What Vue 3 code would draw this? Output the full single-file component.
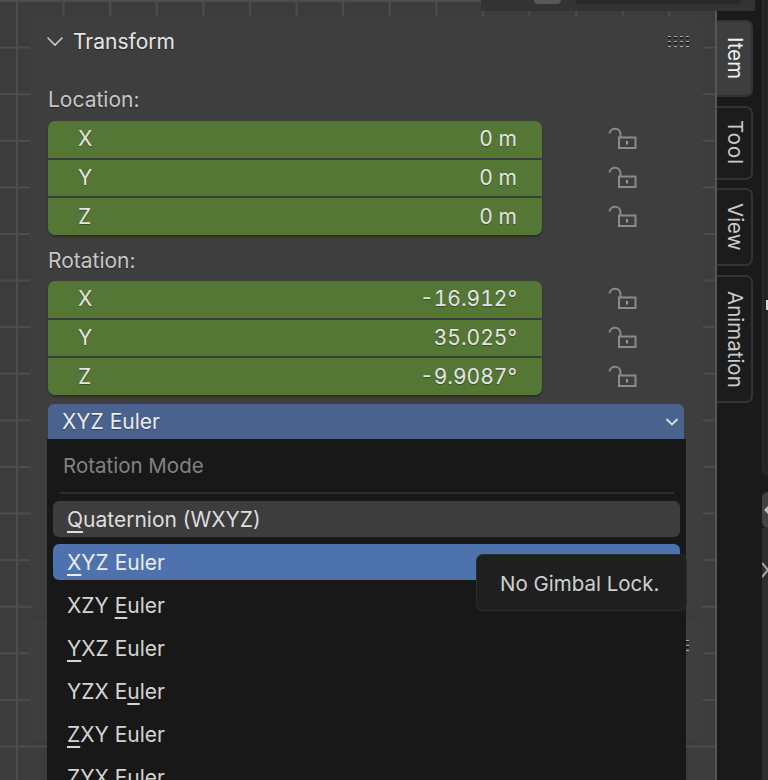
<script setup>
const locRows = [
  { axis: "X", value: "0 m" },
  { axis: "Y", value: "0 m" },
  { axis: "Z", value: "0 m" },
]
const rotRows = [
  { axis: "X", value: "-16.912°" },
  { axis: "Y", value: "35.025°" },
  { axis: "Z", value: "-9.9087°" },
]
const tabs = ["Item", "Tool", "View", "Animation"]
// each item is split around its underlined shortcut letter
const modes = [
  { pre: "", key: "X", post: "YZ Euler", active: true },
  { pre: "XZY ", key: "E", post: "uler" },
  { pre: "", key: "Y", post: "XZ Euler" },
  { pre: "YZX E", key: "u", post: "ler" },
  { pre: "", key: "Z", post: "XY Euler" },
  { pre: "ZYX Euler", key: "", post: "" },
]
</script>

<template>
  <div class="editor">
    <div class="viewport">
      <div class="topbar">
        <span class="top-pill"></span>
        <span class="top-field"></span>
      </div>
      <section class="panel">
        <header class="panel-head">
          <svg class="chevron" width="18" height="12" viewBox="0 0 18 12">
            <path d="M1.5 2.5 9 10l7.5-7.5" fill="none" stroke="#c8c8c8" stroke-width="1.6" />
          </svg>
          <span class="panel-title">Transform</span>
          <span class="grip"></span>
        </header>

        <div class="label">Location:</div>
        <div class="field-group">
          <div class="column">
            <div v-for="row in locRows" :key="row.axis" class="field">
              <span class="axis">{{ row.axis }}</span>
              <span class="value">{{ row.value }}</span>
            </div>
          </div>
          <div class="locks">
            <svg v-for="row in locRows" :key="row.axis" class="lock" width="30" height="24" viewBox="0 0 30 24">
              <path d="M2.5 7.5C3 1.5 13.5 0.5 13.5 8.5V11" fill="none" stroke="#8a8a8a" stroke-width="2" />
              <rect x="12" y="11.5" width="16.5" height="10.5" fill="none" stroke="#8a8a8a" stroke-width="2" />
              <rect x="19" y="15" width="2" height="3.5" fill="#9a9a9a" />
            </svg>
          </div>
        </div>

        <div class="label label-rot">Rotation:</div>
        <div class="field-group">
          <div class="column">
            <div v-for="row in rotRows" :key="row.axis" class="field">
              <span class="axis">{{ row.axis }}</span>
              <span class="value">{{ row.value }}</span>
            </div>
          </div>
          <div class="locks">
            <svg v-for="row in rotRows" :key="row.axis" class="lock" width="30" height="24" viewBox="0 0 30 24">
              <path d="M2.5 7.5C3 1.5 13.5 0.5 13.5 8.5V11" fill="none" stroke="#8a8a8a" stroke-width="2" />
              <rect x="12" y="11.5" width="16.5" height="10.5" fill="none" stroke="#8a8a8a" stroke-width="2" />
              <rect x="19" y="15" width="2" height="3.5" fill="#9a9a9a" />
            </svg>
          </div>
        </div>

        <div class="select">
          <span>XYZ Euler</span>
          <svg width="14" height="10" viewBox="0 0 14 10">
            <path d="M1.5 2 7 7.5 12.5 2" fill="none" stroke="#e0e0e0" stroke-width="1.8" />
          </svg>
        </div>
      </section>

      <section class="panel panel-second">
        <header class="panel-head">
          <span class="grip"></span>
        </header>
      </section>

      <div class="menu">
        <div class="menu-title">Rotation Mode</div>
        <div class="menu-sep"></div>
        <div class="menu-item current"><u>Q</u>uaternion (WXYZ)</div>
        <div v-for="m in modes" :key="m.pre + m.key + m.post" class="menu-item" :class="{ active: m.active }">{{ m.pre }}<u>{{ m.key }}</u>{{ m.post }}</div>
      </div>
      <div class="tooltip">No Gimbal Lock.</div>
    </div>

    <nav class="tabs">
      <div v-for="(t, i) in tabs" :key="t" class="tab" :class="{ on: i === 0 }">
        <span>{{ t }}</span>
      </div>
    </nav>

    <aside class="edge">
      <div class="edge-block">
        <span class="edge-tick"></span>
      </div>
      <div class="edge-pill">
        <svg width="6" height="14" viewBox="0 0 6 14"><path d="M6 3 2 7l4 4z" fill="#bdbdbd" /></svg>
      </div>
      <div class="edge-chevron">
        <svg width="6" height="18" viewBox="0 0 6 18"><path d="M0 2 6 9l-6 7" fill="none" stroke="#a8a8a8" stroke-width="2" /></svg>
      </div>
    </aside>
  </div>
</template>

<style>
html, body {
  margin: 0;
  background: #1a1a1a;
}
</style>

<style scoped>
.editor {
  display: flex;
  width: 768px;
  height: 780px;
  overflow: hidden;
  font-family: Inter, "Liberation Sans", sans-serif;
  color: #dedede;
  position: relative;
}

.viewport {
  position: relative;
  width: 717px;
  height: 780px;
  flex: none;
  box-sizing: border-box;
  padding: 16px 12px 0 30px;
  background-color: #3c3c3c;
  background-image:
    linear-gradient(#4d4d4d 2px, transparent 2px),
    linear-gradient(90deg, #4d4d4d 2px, transparent 2px);
  background-size: 46.6px 46.6px;
  background-position: 16px 0;
  border-right: 2px solid #555;
}

/* strip of the header that pokes in above the panel */
.topbar {
  position: absolute;
  left: 481px;
  top: 0;
  width: 274px;
  height: 11px;
  background: #333;
  z-index: 1;
}

.top-pill {
  position: absolute;
  left: 53px;
  top: 0;
  width: 27px;
  height: 4px;
  background: #585858;
  border-radius: 0 0 6px 6px;
}

.top-field {
  position: absolute;
  left: 95px;
  top: 0;
  width: 165px;
  height: 4px;
  background: #292929;
  border-radius: 0 0 5px 5px;
}

.panel {
  background: #3e3e3e;
  border-radius: 8px;
  height: 594px;
  box-sizing: border-box;
  padding: 0 18px;
}

.panel-second {
  height: 120px;
  margin-top: 10px;
}

.panel-head {
  display: flex;
  align-items: center;
  height: 50px;
  margin-bottom: 19px;
  margin-left: -2px;
}

.chevron {
  margin-right: 9px;
}

.panel-title {
  font-size: 21px;
  color: #e6e6e6;
  text-shadow: 0 1px 1px rgba(0, 0, 0, 0.4);
}

.grip {
  margin-left: auto;
  margin-right: -6px;
  width: 23px;
  height: 11px;
  background-image:
    linear-gradient(#1e1e1e 2px, transparent 2px),
    linear-gradient(#a8a8a8 2px, transparent 2px);
  background-size: 6px 5px;
  background-position: 0 1px, 0 0;
  -webkit-mask-image: linear-gradient(90deg, #000 3px, transparent 3px);
  -webkit-mask-size: 6px 100%;
  mask-image: linear-gradient(90deg, #000 3px, transparent 3px);
  mask-size: 6px 100%;
}

.label {
  font-size: 21px;
  line-height: 30px;
  height: 36px;
  color: #c6c6c6;
  text-shadow: 0 1px 1px rgba(0, 0, 0, 0.4);
}

.label-rot {
  margin-top: 10px;
  line-height: 31px;
}

.field-group {
  display: flex;
}

.column {
  width: 494px;
  display: flex;
  flex-direction: column;
  gap: 2px;
  border-radius: 7px;
  overflow: hidden;
  box-shadow: 0 2px 2px #2e2e2e;
}

.field {
  height: 36.7px;
  flex: none;
  box-sizing: border-box;
  display: flex;
  justify-content: space-between;
  align-items: center;
  padding: 0 25px 1px 30px;
  background: #547735;
  font-size: 21px;
  color: #e4e4e4;
  text-shadow: 0 1px 1px rgba(0, 0, 0, 0.35);
}

.value {
  font-variant-numeric: tabular-nums;
}

.locks {
  margin-left: 65px;
  display: flex;
  flex-direction: column;
  gap: 15px;
  padding-top: 5px;
}

.lock {
  display: block;
}

.select {
  margin-top: 9px;
  width: 636px;
  height: 35px;
  box-sizing: border-box;
  padding: 0 5px 0 14px;
  display: flex;
  align-items: center;
  justify-content: space-between;
  background: #4a628e;
  border-radius: 6px 6px 0 0;
  font-size: 21px;
  color: #ececec;
  text-shadow: 0 1px 1px rgba(0, 0, 0, 0.35);
}

.menu {
  position: absolute;
  left: 47px;
  top: 439px;
  width: 639px;
  height: 341px;
  box-sizing: border-box;
  padding: 0 6px;
  background: #181818;
  font-size: 21px;
  color: #d4d4d4;
}

.menu-title {
  height: 53px;
  line-height: 54px;
  padding-left: 10px;
  font-size: 20.5px;
  color: #828282;
}

.menu-sep {
  height: 2px;
  margin: 0 6px 7px 7px;
  background: #2e2e2e;
}

.menu-item {
  height: 36px;
  line-height: 38px;
  margin-bottom: 7px;
  padding-left: 14px;
  border-radius: 6px;
  white-space: pre;
}

.menu-item u {
  text-underline-offset: 4px;
  text-decoration-thickness: 2px;
}

.menu-item.current {
  background: #3d3d3d;
  color: #dedede;
}

.menu-item.active {
  background: #4d72ae;
  color: #ececec;
}

.tooltip {
  position: absolute;
  left: 476px;
  top: 554px;
  width: 211px;
  height: 57px;
  box-sizing: border-box;
  padding-left: 23px;
  line-height: 57px;
  background: #1f1f1f;
  border: 1px dotted #3a3a3a;
  border-radius: 7px;
  font-size: 20.5px;
  color: #cfcfcf;
}

.tabs {
  width: 36px;
  flex: none;
  padding: 20px 9px 0 0;
  display: flex;
  flex-direction: column;
  background: #1a1a1a;
}

.tab {
  display: flex;
  justify-content: center;
  align-items: center;
  box-sizing: border-box;
  flex: none;
  width: 36px;
  background: #1c1c1c;
  border: 2px solid #333;
  border-left: 0;
  border-radius: 0 7px 7px 0;
  padding-left: 3px;
  font-size: 20.5px;
  color: #cacaca;
}

.tab:nth-child(1) { height: 77px; margin-bottom: 9px; }
.tab:nth-child(2) { height: 74px; margin-bottom: 8px; letter-spacing: 1px; }
.tab:nth-child(3) { height: 78px; margin-bottom: 9px; }
.tab:nth-child(4) { height: 128px; }

.tab.on {
  background: #3e3e3e;
  color: #f0f0f0;
}

.tab span {
  writing-mode: vertical-rl;
}

.edge {
  flex: 1;
  min-width: 0;
  display: flex;
  flex-direction: column;
  align-items: flex-end;
  margin-left: -9px;
}

.edge-block {
  position: relative;
  width: 6px;
  height: 476px;
  flex: none;
  background: #242424;
  border-left: 1px dotted #3a3a3a;
  box-sizing: border-box;
  border-radius: 0 0 0 6px;
}

.edge-tick {
  position: absolute;
  right: 0;
  top: 300px;
  width: 2px;
  height: 10px;
  background: #d8d8d8;
}

.edge-pill {
  width: 6px;
  height: 36px;
  flex: none;
  margin-top: 16px;
  display: flex;
  align-items: center;
  background: #424242;
  border-radius: 6px 0 0 6px;
}

.edge-chevron {
  width: 6px;
  flex: 1;
  display: flex;
  justify-content: flex-end;
  padding-top: 33px;
  background: #2e2e2e;
}

.edge-chevron svg {
  display: block;
}
</style>
